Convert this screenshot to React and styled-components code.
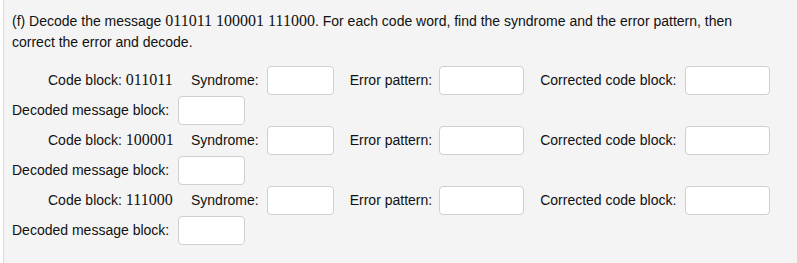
import React from 'react';
import styled, { createGlobalStyle } from 'styled-components';

const GlobalStyle = createGlobalStyle`
  html, body {
    margin: 0;
    padding: 0;
    background: #fff;
  }
  body {
    font-family: "Liberation Sans", Arial, Helvetica, sans-serif;
    color: #111;
  }
`;

const Page = styled.div`
  padding-left: 3px;
  background: #fff;
`;

const Problem = styled.div`
  box-sizing: border-box;
  height: 263px;
  background: #f4f4f4;
  border-left: 1px solid #dcdcdc;
  padding: 11px 8px 0 8px;
  font-size: 14px;
`;

const Prompt = styled.p`
  margin: 0 0 12px 0;
  line-height: 21px;
  max-width: 755px;
`;

const Math = styled.span`
  font-family: "Liberation Serif", "Times New Roman", serif;
  font-size: 16px;
  line-height: 1;
`;

const Row = styled.div`
  display: flex;
  align-items: center;
  height: 30px;
  padding-left: ${({ indent }) => (indent ? '36px' : '0')};
`;

const CodeLabel = styled.span`
  width: 129px;
  white-space: nowrap;
`;

const Field = styled.span`
  display: inline-flex;
  align-items: center;
  margin-left: ${({ gap }) => gap}px;
`;

const Label = styled.span`
  white-space: nowrap;
`;

const Box = styled.input`
  box-sizing: border-box;
  width: ${({ wide }) => (wide ? '85px' : '67px')};
  height: 29px;
  margin: 0 0 0 ${({ space }) => space || 8}px;
  padding: 0 6px;
  border: 1px solid #cfcfcf;
  border-radius: 4px;
  background: #fff;
  font-size: 14px;
  outline: none;
`;

const blocks = ['011011', '100001', '111000'];

export default function App() {
  return (
    <Page>
      <GlobalStyle />
      <Problem>
        <Prompt>
          (f) Decode the message <Math>011011 100001 111000</Math>. For each code word, find the syndrome and the error pattern, then correct the error and decode.
        </Prompt>
        {blocks.map((b) => (
          <React.Fragment key={b}>
            <Row indent>
              <CodeLabel>
                Code block: <Math>{b}</Math>
              </CodeLabel>
              <Field gap={14}>
                <Label>Syndrome:</Label>
                <Box type="text" />
              </Field>
              <Field gap={16}>
                <Label>Error pattern:</Label>
                <Box type="text" wide space={7} />
              </Field>
              <Field gap={16}>
                <Label>Corrected code block:</Label>
                <Box type="text" wide space={9} />
              </Field>
            </Row>
            <Row>
              <Label>Decoded message block:</Label>
              <Box type="text" space={9} />
            </Row>
          </React.Fragment>
        ))}
      </Problem>
    </Page>
  );
}
